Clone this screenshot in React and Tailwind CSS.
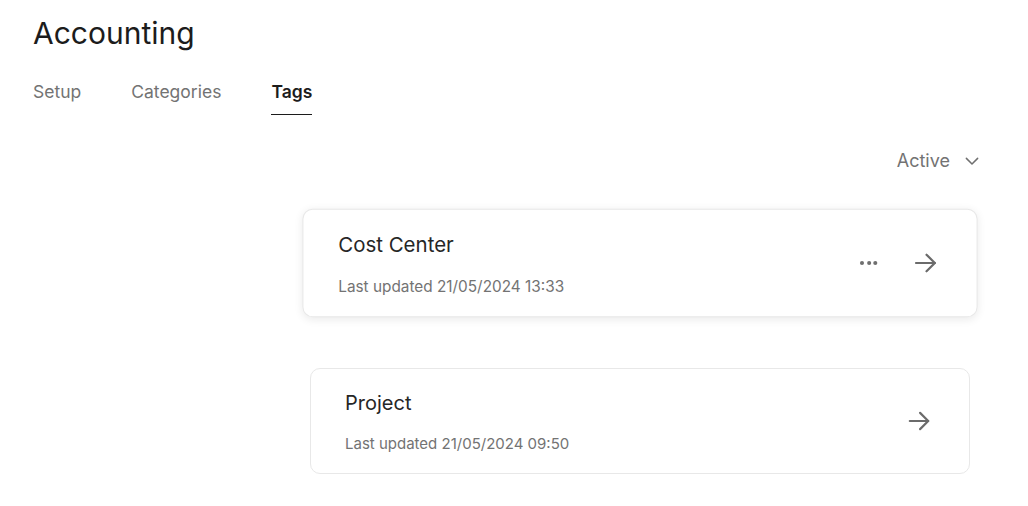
import React from 'react';

const ArrowRight = () => (
  <svg width="26" height="26" viewBox="0 0 24 24" fill="none" stroke="#6b6b6b" strokeWidth="2" strokeLinecap="round" strokeLinejoin="round">
    <path d="M3.5 12h17" />
    <path d="M13 4.5l7.5 7.5-7.5 7.5" />
  </svg>
);

const Dots = () => (
  <div className="flex items-center gap-[2.5px]">
    <span className="w-[4px] h-[4px] rounded-full bg-[#6f6f6f]" />
    <span className="w-[4px] h-[4px] rounded-full bg-[#6f6f6f]" />
    <span className="w-[4px] h-[4px] rounded-full bg-[#6f6f6f]" />
  </div>
);

const TagCard = ({ name, updated, hovered }) => (
  <div
    className={`flex items-center justify-between h-[106px] rounded-[10px] border border-[#e8e8e8] bg-white pl-[34px] pr-[37px] ${
      hovered ? 'scale-[1.023] shadow-[0_2px_8px_rgba(0,0,0,0.08)]' : ''
    }`}
  >
    <div className="flex flex-col">
      <span className="text-[20px] leading-[28px] text-[#262626]">{name}</span>
      <span className="mt-[17px] text-[15px] leading-[20px] text-[#737373]">Last updated {updated}</span>
    </div>
    <div className="flex items-center gap-[34px]">
      {hovered && <Dots />}
      <ArrowRight />
    </div>
  </div>
);

const App = () => {
  const tabs = [
    { label: 'Setup', active: false },
    { label: 'Categories', active: false },
    { label: 'Tags', active: true },
  ];

  return (
    <div className="min-h-[506px] bg-white font-['Inter',sans-serif] pt-[15px]">
      <div className="pl-[33px]">
        <h1 className="text-[30px] leading-[36px] text-[#1c1c1c]">Accounting</h1>

        <div className="mt-[27px] flex gap-[50px]">
          {tabs.map((tab) => (
            <div
              key={tab.label}
              className={`pb-[8px] text-[17.5px] leading-[28px] ${
                tab.active ? 'font-semibold text-[#1c1c1c] border-b-[1.5px] border-[#1c1c1c]' : 'text-[#737373] border-b-[1.5px] border-transparent'
              }`}
            >
              {tab.label}
            </div>
          ))}
        </div>
      </div>

      <div className="mt-[32px] flex justify-end pr-[47px]">
        <div className="flex items-center gap-[13px] text-[18px] leading-[28px] text-[#737373]">
          <span>Active</span>
          <svg width="18" height="18" viewBox="0 0 24 24" fill="none" stroke="#6f6f6f" strokeWidth="2" strokeLinecap="round" strokeLinejoin="round">
            <path d="M4.5 8.5l7.5 7.5 7.5-7.5" />
          </svg>
        </div>
      </div>

      <div className="ml-[310px] w-[660px] mt-[35px] flex flex-col gap-[52px]">
        <TagCard name="Cost Center" updated="21/05/2024 13:33" hovered />
        <TagCard name="Project" updated="21/05/2024 09:50" />
      </div>
    </div>
  );
};

export default App;
